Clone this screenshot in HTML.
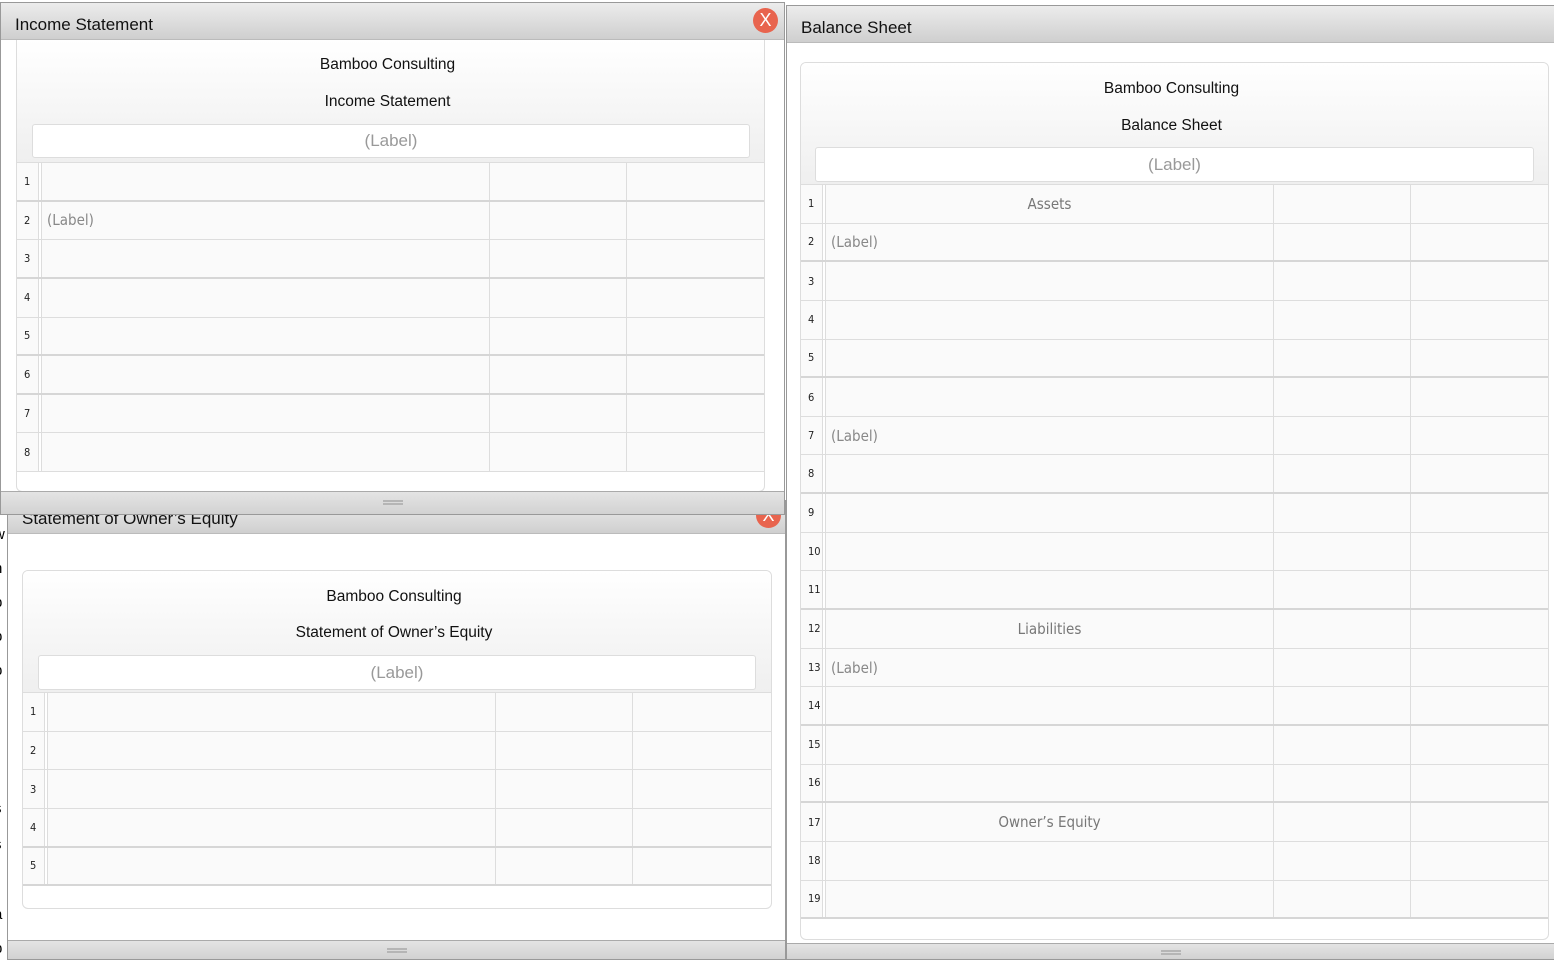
<!DOCTYPE html>
<html><head><meta charset="utf-8"><style>
*{box-sizing:border-box;margin:0;padding:0}
body{width:1554px;height:958px;background:#fff;position:relative;overflow:hidden;font-family:"Liberation Sans",sans-serif;}
.win{position:absolute;background:#fff;border:1px solid #999;}
.tb{position:absolute;left:0;right:0;top:0;background:linear-gradient(#ececec,#cfcfcf);border-bottom:1px solid #bbb;font-size:17px;color:#111;padding-left:14px}
.bb{position:absolute;left:0;right:0;bottom:0;background:linear-gradient(#e4e4e4,#d2d2d2);border-top:1px solid #aaa}
.grip{position:absolute;left:50%;width:20px;margin-left:-10px;height:5px;border-top:2px solid #b5b5b5;border-bottom:2px solid #b5b5b5}
.x{position:absolute;width:25px;height:25px;border-radius:50%;background:#e8644e;color:#fff;font-size:18px;text-align:center;line-height:25px}
.panel{position:absolute;border:1px solid #ddd;border-radius:6px;background:#fff;overflow:hidden}
.hd{background:linear-gradient(#fff,#efefef);position:absolute;left:0;right:0;top:0}
.ht{position:absolute;left:-6px;right:0;text-align:center;font-size:15.5px;color:#111}
.lb{position:absolute;background:#fff;border:1px solid #ddd;border-radius:3px;text-align:center;color:#999;font-size:17px}
.tbl{position:absolute;left:0;right:0;border-top:1px solid #ddd;background:#fff}
.r{display:flex;height:38.65px;border-bottom:1px solid #ddd;font-family:"Liberation Sans Narrow","DejaVu Sans Condensed","Liberation Sans",sans-serif}
.r.t{border-bottom:2px solid #d6d6d6}
.n{width:22px;border-right:1px solid #ddd;background:#fafafa;font-size:11px;color:#222;display:flex;align-items:center;padding-left:7px}
.m{margin-left:2px;border-left:1px solid #ddd;background:#fafafa;border-right:1px solid #ddd;display:flex;align-items:center;font-size:15px;color:#888;padding-left:5px}
.m.c{justify-content:center;padding-left:0;color:#777}
.c2{width:137px;border-right:1px solid #ddd;background:#fafafa}
.c3{flex:1;background:#fafafa}
</style></head><body>

<div style="position:absolute;left:0;top:520px;width:8px;height:438px;border-right:1px solid #999;background:#fff;font-size:15px;overflow:hidden">
<div style="position:absolute;left:-6px;top:6px">w</div><div style="position:absolute;left:-6px;top:40px">n</div><div style="position:absolute;left:-6px;top:74px">p</div><div style="position:absolute;left:-6px;top:108px">p</div><div style="position:absolute;left:-6px;top:142px">p</div><div style="position:absolute;left:-6px;top:280px">s</div><div style="position:absolute;left:-6px;top:316px">s</div><div style="position:absolute;left:-6px;top:386px">a</div><div style="position:absolute;left:-6px;top:420px">p</div>
</div>

<div class="win" style="left:7px;top:500px;width:779px;height:460px;">
 <div class="tb" style="height:33px;line-height:36px;">Statement of Owner’s Equity</div>
 <div class="x" style="left:748px;top:2px;">X</div>
 <div class="panel" style="left:14px;top:69px;width:750px;height:339px;">
  <div class="hd" style="height:121px"></div>
  <div class="ht" style="top:17px">Bamboo Consulting</div>
  <div class="ht" style="top:53px">Statement of Owner’s Equity</div>
  <div class="lb" style="left:15px;top:84px;width:718px;height:35px;line-height:33px">(Label)</div>
  <div class="tbl" style="top:121px">
   <div class="r"><div class="n">1</div><div class="m" style="width:449px"></div><div class="c2"></div><div class="c3"></div></div>
   <div class="r"><div class="n">2</div><div class="m" style="width:449px"></div><div class="c2"></div><div class="c3"></div></div>
   <div class="r"><div class="n">3</div><div class="m" style="width:449px"></div><div class="c2"></div><div class="c3"></div></div>
   <div class="r t"><div class="n">4</div><div class="m" style="width:449px"></div><div class="c2"></div><div class="c3"></div></div>
   <div class="r t"><div class="n">5</div><div class="m" style="width:449px"></div><div class="c2"></div><div class="c3"></div></div>
  </div>
 </div>
 <div class="bb" style="height:19px"><div class="grip" style="top:7px"></div></div>
</div>

<div class="win" style="left:0;top:2px;width:785px;height:513px;">
 <div class="tb" style="height:37px;line-height:44px;">Income Statement</div>
 <div class="x" style="left:752px;top:5px;">X</div>
 <div class="panel" style="left:15px;top:37px;width:749px;height:452px;border-top:none;border-radius:0 0 6px 6px">
  <div class="hd" style="height:122px"></div>
  <div class="ht" style="top:16px">Bamboo Consulting</div>
  <div class="ht" style="top:53px">Income Statement</div>
  <div class="lb" style="left:15px;top:84px;width:718px;height:34px;line-height:32px">(Label)</div>
  <div class="tbl" style="top:122px">
   <div class="r t"><div class="n">1</div><div class="m" style="width:449px"></div><div class="c2"></div><div class="c3"></div></div>
   <div class="r"><div class="n">2</div><div class="m" style="width:449px">(Label)</div><div class="c2"></div><div class="c3"></div></div>
   <div class="r t"><div class="n">3</div><div class="m" style="width:449px"></div><div class="c2"></div><div class="c3"></div></div>
   <div class="r"><div class="n">4</div><div class="m" style="width:449px"></div><div class="c2"></div><div class="c3"></div></div>
   <div class="r t"><div class="n">5</div><div class="m" style="width:449px"></div><div class="c2"></div><div class="c3"></div></div>
   <div class="r t"><div class="n">6</div><div class="m" style="width:449px"></div><div class="c2"></div><div class="c3"></div></div>
   <div class="r"><div class="n">7</div><div class="m" style="width:449px"></div><div class="c2"></div><div class="c3"></div></div>
   <div class="r"><div class="n">8</div><div class="m" style="width:449px"></div><div class="c2"></div><div class="c3"></div></div>
  </div>
 </div>
 <div class="bb" style="height:23px"><div class="grip" style="top:8px"></div></div>
</div>

<div class="win" style="left:786px;top:5px;width:770px;height:955px;">
 <div class="tb" style="height:37px;line-height:44px;">Balance Sheet</div>
 <div class="panel" style="left:13px;top:56px;width:749px;height:878px;">
  <div class="hd" style="height:121px"></div>
  <div class="ht" style="top:17px">Bamboo Consulting</div>
  <div class="ht" style="top:54px">Balance Sheet</div>
  <div class="lb" style="left:14px;top:84px;width:719px;height:35px;line-height:33px">(Label)</div>
  <div class="tbl" style="top:121px">
   <div class="r"><div class="n">1</div><div class="m c" style="width:449px">Assets</div><div class="c2"></div><div class="c3"></div></div>
   <div class="r t"><div class="n">2</div><div class="m" style="width:449px">(Label)</div><div class="c2"></div><div class="c3"></div></div>
   <div class="r"><div class="n">3</div><div class="m" style="width:449px"></div><div class="c2"></div><div class="c3"></div></div>
   <div class="r"><div class="n">4</div><div class="m" style="width:449px"></div><div class="c2"></div><div class="c3"></div></div>
   <div class="r t"><div class="n">5</div><div class="m" style="width:449px"></div><div class="c2"></div><div class="c3"></div></div>
   <div class="r"><div class="n">6</div><div class="m" style="width:449px"></div><div class="c2"></div><div class="c3"></div></div>
   <div class="r"><div class="n">7</div><div class="m" style="width:449px">(Label)</div><div class="c2"></div><div class="c3"></div></div>
   <div class="r t"><div class="n">8</div><div class="m" style="width:449px"></div><div class="c2"></div><div class="c3"></div></div>
   <div class="r"><div class="n">9</div><div class="m" style="width:449px"></div><div class="c2"></div><div class="c3"></div></div>
   <div class="r"><div class="n">10</div><div class="m" style="width:449px"></div><div class="c2"></div><div class="c3"></div></div>
   <div class="r t"><div class="n">11</div><div class="m" style="width:449px"></div><div class="c2"></div><div class="c3"></div></div>
   <div class="r"><div class="n">12</div><div class="m c" style="width:449px">Liabilities</div><div class="c2"></div><div class="c3"></div></div>
   <div class="r"><div class="n">13</div><div class="m" style="width:449px">(Label)</div><div class="c2"></div><div class="c3"></div></div>
   <div class="r t"><div class="n">14</div><div class="m" style="width:449px"></div><div class="c2"></div><div class="c3"></div></div>
   <div class="r"><div class="n">15</div><div class="m" style="width:449px"></div><div class="c2"></div><div class="c3"></div></div>
   <div class="r t"><div class="n">16</div><div class="m" style="width:449px"></div><div class="c2"></div><div class="c3"></div></div>
   <div class="r"><div class="n">17</div><div class="m c" style="width:449px">Owner’s Equity</div><div class="c2"></div><div class="c3"></div></div>
   <div class="r"><div class="n">18</div><div class="m" style="width:449px"></div><div class="c2"></div><div class="c3"></div></div>
   <div class="r t"><div class="n">19</div><div class="m" style="width:449px"></div><div class="c2"></div><div class="c3"></div></div>
  </div>
 </div>
 <div class="bb" style="height:16px"><div class="grip" style="top:6px"></div></div>
</div>
</body></html>
